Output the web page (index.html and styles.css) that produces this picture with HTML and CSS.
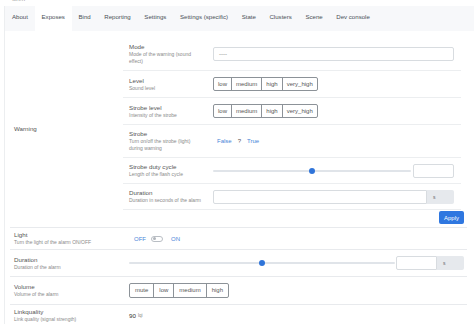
FILE: index.html
```
<!DOCTYPE html>
<html lang="en">
<head>
    <meta charset="UTF-8">
    <meta name="viewport" content="width=device-width, initial-scale=1.0">
    <title>Siren - Exposes</title>
    <link rel="stylesheet" href="styles.css">
</head>
<body>

<div class="crumb"><span>siren</span></div>

<div class="card">
    <!-- tabs -->
    <div class="tabs">
        <span class="tab">About</span>
        <span class="tab active">Exposes</span>
        <span class="tab">Bind</span>
        <span class="tab">Reporting</span>
        <span class="tab">Settings</span>
        <span class="tab">Settings (specific)</span>
        <span class="tab">State</span>
        <span class="tab">Clusters</span>
        <span class="tab">Scene</span>
        <span class="tab">Dev console</span>
    </div>

    <div class="rows">
        <!-- Warning (composite) -->
        <div class="row">
            <div class="row-label"><div class="name">Warning</div></div>
            <div class="row-value stack">
                <div class="nested">
                    <div class="field">
                        <div class="field-label">
                            <div class="name">Mode</div>
                            <div class="desc">Mode of the warning (sound effect)</div>
                        </div>
                        <div class="field-value"><div class="select">----</div></div>
                    </div>
                    <div class="field">
                        <div class="field-label">
                            <div class="name">Level</div>
                            <div class="desc">Sound level</div>
                        </div>
                        <div class="field-value">
                            <div class="btn-group"><span>low</span><span>medium</span><span>high</span><span>very_high</span></div>
                        </div>
                    </div>
                    <div class="field">
                        <div class="field-label">
                            <div class="name">Strobe level</div>
                            <div class="desc">Intensity of the strobe</div>
                        </div>
                        <div class="field-value">
                            <div class="btn-group"><span>low</span><span>medium</span><span>high</span><span>very_high</span></div>
                        </div>
                    </div>
                    <div class="field">
                        <div class="field-label">
                            <div class="name">Strobe</div>
                            <div class="desc">Turn on/off the strobe (light) during warning</div>
                        </div>
                        <div class="field-value">
                            <div class="bool"><span class="link">False</span><span class="unknown">?</span><span class="link">True</span></div>
                        </div>
                    </div>
                    <div class="field">
                        <div class="field-label">
                            <div class="name">Strobe duty cycle</div>
                            <div class="desc">Length of the flash cycle</div>
                        </div>
                        <div class="field-value">
                            <input type="range" class="range" min="0" max="10" value="5">
                            <input type="text" class="num">
                        </div>
                    </div>
                    <div class="field">
                        <div class="field-label">
                            <div class="name">Duration</div>
                            <div class="desc">Duration in seconds of the alarm</div>
                        </div>
                        <div class="field-value">
                            <div class="input-group"><input type="text" class="grow"><span class="addon">s</span></div>
                        </div>
                    </div>
                </div>
                <div class="actions"><button class="btn-apply">Apply</button></div>
            </div>
        </div>

        <!-- Light -->
        <div class="row">
            <div class="row-label">
                <div class="name">Light</div>
                <div class="desc">Turn the light of the alarm ON/OFF</div>
            </div>
            <div class="row-value">
                <div class="toggle">
                    <span class="link">OFF</span>
                    <span class="switch"><span class="knob"></span></span>
                    <span class="link">ON</span>
                </div>
            </div>
        </div>

        <!-- Duration -->
        <div class="row">
            <div class="row-label">
                <div class="name">Duration</div>
                <div class="desc">Duration of the alarm</div>
            </div>
            <div class="row-value spaced">
                <input type="range" class="range" min="0" max="10" value="5">
                <div class="input-group small"><input type="text" class="grow"><span class="addon">s</span></div>
            </div>
        </div>

        <!-- Volume -->
        <div class="row">
            <div class="row-label">
                <div class="name">Volume</div>
                <div class="desc">Volume of the alarm</div>
            </div>
            <div class="row-value">
                <div class="btn-group tall"><span>mute</span><span>low</span><span>medium</span><span>high</span></div>
            </div>
        </div>

        <!-- Linkquality -->
        <div class="row">
            <div class="row-label">
                <div class="name">Linkquality</div>
                <div class="desc">Link quality (signal strength)</div>
            </div>
            <div class="row-value">
                <span class="value">90</span><span class="unit">lqi</span>
            </div>
        </div>
    </div>
</div>

</body>
</html>
```

FILE: styles.css
```
body {
    font-family: "Liberation Sans", Arial, sans-serif;
    background-color: #fff;
    color: #444;
    margin: 0;
    padding: 0;
}
.crumb {
    height: 6px;
    overflow: hidden;
    padding-left: 12px;
}
.crumb span {
    display: block;
    margin-top: -5px;
    font-size: 6px;
    line-height: 8px;
    color: #999;
}
.card {
    margin-left: 4px;
    border-left: 1px solid #eceef0;
}
.tabs {
    display: flex;
    background-color: #f7f8fa;
    height: 25px;
}
.tab {
    padding: 0 6.8px;
    font-size: 6.1px;
    line-height: 22px;
    color: #4a5057;
}
.tab:first-child {
    padding-left: 7px;
}
.tab.active {
    background-color: #fff;
}
.rows {
    margin: 0 7px 0 5px;
}
.row {
    display: grid;
    grid-template-columns: 109px 1fr;
    align-items: center;
    padding: 3px 3px 3px 4px;
    border-bottom: 1px solid #e8eaed;
}
.row-value {
    display: flex;
    align-items: center;
    padding-left: 6px;
}
.row-value.stack {
    display: block;
    padding-left: 0;
}
.name {
    font-size: 6.2px;
    line-height: 8px;
    color: #555;
}
.desc {
    font-size: 5px;
    line-height: 7px;
    color: #8a8a8a;
}
.nested {
    margin: 4px 3px 0 0;
}
.field {
    display: grid;
    grid-template-columns: 84px 1fr;
    align-items: center;
    padding: 5px 7px 5px 6px;
    border-bottom: 1px solid #eceef0;
}
.field:nth-child(2),
.field:nth-child(3) {
    padding-top: 5.5px;
    padding-bottom: 5.5px;
}
.field-label {
    padding-right: 9px;
}
.field-value {
    display: flex;
    align-items: center;
}
.field-value > .select,
.field-value > .input-group {
    flex: 1;
}
.select {
    height: 14px;
    box-sizing: border-box;
    border: 1px solid #d8dce0;
    border-radius: 2px;
    padding: 0 5px;
    font-size: 6px;
    line-height: 12px;
    color: #777;
}
.btn-group {
    display: flex;
}
.btn-group span {
    height: 14px;
    box-sizing: border-box;
    border: 1px solid #8c9298;
    margin-left: -1px;
    padding: 0 4px;
    font-size: 6px;
    line-height: 12px;
    color: #555;
}
.btn-group span:first-child {
    margin-left: 0;
    border-radius: 2px 0 0 2px;
}
.btn-group span:last-child {
    border-radius: 0 2px 2px 0;
}
.btn-group.tall {
    margin: 3px 0;
}
.btn-group.tall span {
    height: 15px;
    line-height: 13px;
    padding: 0 5px;
}
.link {
    color: #4a85d8;
    font-size: 6px;
}
.bool {
    display: flex;
    align-items: center;
    gap: 6px;
    padding-left: 4px;
    line-height: 8px;
}
.unknown {
    font-size: 6px;
    color: #555;
}
.range {
    -webkit-appearance: none;
    appearance: none;
    flex: 1;
    min-width: 0;
    height: 2px;
    margin: 0;
    background: #e0e4e9;
    border-radius: 1px;
    outline: none;
}
.range::-webkit-slider-thumb {
    -webkit-appearance: none;
    width: 6px;
    height: 6px;
    border-radius: 50%;
    background: #2f74d9;
    border: none;
}
input[type="text"] {
    height: 14px;
    box-sizing: border-box;
    border: 1px solid #d8dce0;
    border-radius: 2px;
    margin: 0;
    padding: 0 4px;
    font-size: 6px;
    background: #fff;
}
.num {
    width: 41px;
    margin-left: 2px !important;
}
.input-group {
    display: flex;
}
.input-group .grow {
    flex: 1;
    min-width: 0;
    border-radius: 2px 0 0 2px;
}
.addon {
    width: 27px;
    height: 14px;
    box-sizing: border-box;
    background-color: #e6e9ed;
    border-radius: 0 2px 2px 0;
    padding-left: 6px;
    font-size: 5px;
    line-height: 14px;
    color: #666;
}
.input-group.small {
    width: 68px;
    margin-left: 1px;
}
.spaced {
    padding-top: 3px;
    padding-bottom: 3px;
}
.actions {
    display: flex;
    justify-content: flex-end;
    margin-top: 1px;
}
.btn-apply {
    display: block;
    width: 25px;
    height: 13px;
    border: none;
    border-radius: 2px;
    padding: 0;
    background-color: #2f77e0;
    color: #fff;
    font-family: inherit;
    font-size: 6px;
}
.toggle {
    display: flex;
    align-items: center;
    padding-left: 5px;
    gap: 5px;
}
.switch {
    display: flex;
    align-items: center;
    width: 12px;
    height: 6px;
    box-sizing: border-box;
    border: 1px solid #b9bec4;
    border-radius: 3px;
    padding: 0 1px;
    margin-right: 3px;
}
.knob {
    width: 3px;
    height: 3px;
    border-radius: 50%;
    background: #b0b5bb;
}
.value {
    font-size: 6.2px;
    color: #333;
}
.unit {
    margin-left: 2px;
    font-size: 4.5px;
    color: #888;
}
```
